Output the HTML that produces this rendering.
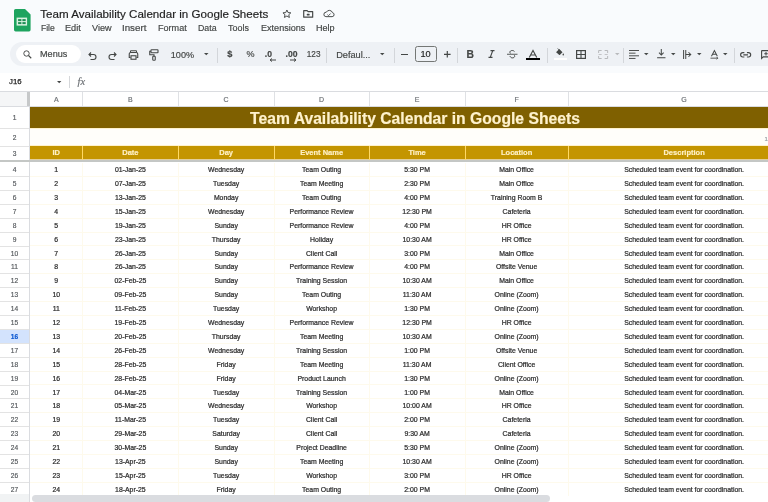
<!DOCTYPE html><html><head><meta charset="utf-8"><style>
*{margin:0;padding:0;box-sizing:border-box}
html,body{width:768px;height:502px;overflow:hidden;will-change:transform;background:#f9fbfd;font-family:"Liberation Sans",sans-serif;position:relative}
.a{position:absolute;white-space:nowrap}
.t{position:absolute;white-space:nowrap;line-height:1;-webkit-text-stroke:0.18px currentColor}
svg{position:absolute;overflow:visible}
</style></head><body>
<svg style="left:14px;top:9px" width="16.6" height="22.4" viewBox="0 0 16.6 22.4"><path d="M1.6 0H11L16.6 5.6V20.8A1.6 1.6 0 0 1 15 22.4H1.6A1.6 1.6 0 0 1 0 20.8V1.6A1.6 1.6 0 0 1 1.6 0Z" fill="#1ea45f"/><rect x="2.6" y="8.6" width="10.5" height="8" fill="#d9f2e0"/><rect x="4.1" y="10.1" width="3.3" height="2" fill="#1f8f55"/><rect x="8.4" y="10.1" width="3.3" height="2" fill="#1f8f55"/><rect x="4.1" y="13.1" width="3.3" height="2" fill="#1f8f55"/><rect x="8.4" y="13.1" width="3.3" height="2" fill="#1f8f55"/></svg>
<div class="t" style="left:40.3px;top:8.1px;font-size:11.6px;color:#1f1f1f">Team Availability Calendar in Google Sheets</div>
<svg style="left:281.8px;top:9px" width="9.8" height="9.2" viewBox="0 0 24 23"><path d="M12 2.5l2.9 6.4 7 .7-5.2 4.7 1.5 6.9L12 17.6l-6.2 3.6 1.5-6.9L2.1 9.6l7-.7z" fill="none" stroke="#444746" stroke-width="2.4" stroke-linejoin="round"/></svg>
<svg style="left:302.6px;top:10px" width="10.4" height="7.8" viewBox="0 0 21 16"><path d="M1.3 1.3h7l2 2h9.4v11.4H1.3z" fill="none" stroke="#444746" stroke-width="2.4" stroke-linejoin="round"/><rect x="7.5" y="7.5" width="6" height="3.6" rx="1" fill="#444746"/></svg>
<svg style="left:322.6px;top:10.2px" width="11.6" height="7.5" viewBox="0 0 26 15"><path d="M6.5 14h14a4.5 4.5 0 0 0 .8-8.9A7.5 7.5 0 0 0 7.5 4 5 5 0 0 0 6.5 14z" fill="none" stroke="#444746" stroke-width="2.2"/><path d="M10 9.5l2.5 2.2 4.5-4.7" fill="none" stroke="#444746" stroke-width="2"/></svg>
<div class="t" style="left:40.7px;top:24.1px;font-size:8.9px;color:#444746;transform-origin:0.0px 0;transform:scaleX(0.963)">File</div>
<div class="t" style="left:65.3px;top:24.1px;font-size:8.9px;color:#444746;transform-origin:0.0px 0;transform:scaleX(1.033)">Edit</div>
<div class="t" style="left:92.0px;top:24.1px;font-size:8.9px;color:#444746;transform-origin:0.0px 0;transform:scaleX(1.025)">View</div>
<div class="t" style="left:122.0px;top:24.1px;font-size:8.9px;color:#444746;transform-origin:0.0px 0;transform:scaleX(1.097)">Insert</div>
<div class="t" style="left:157.5px;top:24.1px;font-size:8.9px;color:#444746;transform-origin:0.0px 0;transform:scaleX(1.021)">Format</div>
<div class="t" style="left:198.0px;top:24.1px;font-size:8.9px;color:#444746;transform-origin:0.0px 0;transform:scaleX(0.991)">Data</div>
<div class="t" style="left:228.3px;top:24.1px;font-size:8.9px;color:#444746;transform-origin:0.0px 0;transform:scaleX(1.008)">Tools</div>
<div class="t" style="left:260.8px;top:24.1px;font-size:8.9px;color:#444746;transform-origin:0.0px 0;transform:scaleX(1.022)">Extensions</div>
<div class="t" style="left:316.3px;top:24.1px;font-size:8.9px;color:#444746;transform-origin:0.0px 0;transform:scaleX(1.020)">Help</div>
<div class="a" style="left:10px;top:41.5px;width:780px;height:24px;border-radius:12px;background:#eef1f5"></div>
<div class="a" style="left:15.8px;top:45.4px;width:64.8px;height:17.6px;border-radius:9px;background:#fff"></div>
<svg style="left:23px;top:50px" width="9" height="9" viewBox="0 0 18 18"><circle cx="7" cy="7" r="5.4" fill="none" stroke="#444746" stroke-width="1.9"/><path d="M11 11l5.5 5.5" stroke="#444746" stroke-width="2.2"/></svg>
<div class="t" style="left:40px;top:50.3px;font-size:9.1px;color:#444746">Menus</div>
<svg style="left:88px;top:51.5px" width="9" height="8" viewBox="0 0 18 16"><path d="M2 5h9a5 5 0 0 1 0 10H5" fill="none" stroke="#444746" stroke-width="2.2"/><path d="M6 1L2 5l4 4" fill="none" stroke="#444746" stroke-width="2.2"/></svg>
<svg style="left:108px;top:51.5px" width="9" height="8" viewBox="0 0 18 16"><path d="M16 5H7a5 5 0 0 0 0 10h6" fill="none" stroke="#444746" stroke-width="2.2"/><path d="M12 1l4 4-4 4" fill="none" stroke="#444746" stroke-width="2.2"/></svg>
<svg style="left:128px;top:49.5px" width="11" height="10" viewBox="0 0 22 20"><path d="M5 5V1.5h12V5" fill="none" stroke="#444746" stroke-width="2"/><path d="M5 15H2.5V8a3 3 0 0 1 3-3h11a3 3 0 0 1 3 3v7H17" fill="none" stroke="#444746" stroke-width="2.2"/><rect x="6" y="11.5" width="10" height="7" fill="none" stroke="#444746" stroke-width="2.2"/></svg>
<svg style="left:149px;top:49px" width="10" height="12" viewBox="0 0 20 24"><rect x="4" y="1.5" width="14" height="6" rx="1" fill="none" stroke="#444746" stroke-width="2.2"/><path d="M4 4.5H1.5v7h8.5v3" fill="none" stroke="#444746" stroke-width="2.2"/><rect x="7.5" y="14.5" width="5" height="8" rx="1.5" fill="none" stroke="#444746" stroke-width="2.2"/></svg>
<div class="t" style="left:170.8px;top:50.6px;font-size:9.1px;color:#444746">100%</div>
<svg style="left:203.8px;top:53.3px" width="4.5" height="2.25" viewBox="0 0 10 5"><path d="M0 0h10L5 5z" fill="#444746"/></svg>
<div class="a" style="left:217.3px;top:47.5px;width:0.8px;height:15px;background:#d3d6da"></div>
<div class="t" style="left:227.2px;top:50.2px;font-size:9.2px;font-weight:bold;color:#444746">$</div>
<div class="t" style="left:246.5px;top:50.4px;font-size:9px;color:#444746">%</div>
<div class="t" style="left:264.8px;top:50.2px;font-size:8.6px;font-weight:bold;color:#444746">.0</div>
<svg style="left:269px;top:57.5px" width="7" height="4" viewBox="0 0 14 8"><path d="M14 4H3M6 1L2 4l4 3" fill="none" stroke="#444746" stroke-width="2"/></svg>
<div class="t" style="left:285.6px;top:50.2px;font-size:8.6px;font-weight:bold;color:#444746">.00</div>
<svg style="left:290px;top:57.5px" width="7" height="4" viewBox="0 0 14 8"><path d="M0 4h11M8 1l4 3-4 3" fill="none" stroke="#444746" stroke-width="2"/></svg>
<div class="t" style="left:306.8px;top:51.2px;font-size:8.2px;color:#444746">123</div>
<div class="a" style="left:325.6px;top:47.5px;width:0.8px;height:15px;background:#d3d6da"></div>
<div class="t" style="left:336.2px;top:50.5px;font-size:9.2px;color:#444746">Defaul...</div>
<svg style="left:379.8px;top:53.3px" width="4.5" height="2.25" viewBox="0 0 10 5"><path d="M0 0h10L5 5z" fill="#444746"/></svg>
<div class="a" style="left:393.8px;top:47.5px;width:0.8px;height:15px;background:#d3d6da"></div>
<div class="a" style="left:401.3px;top:53.9px;width:7px;height:1.3px;background:#444746"></div>
<div class="a" style="left:415.3px;top:46.3px;width:21.4px;height:15.4px;border:1px solid #747775;border-radius:2.5px"></div>
<div class="t" style="left:420.5px;top:50px;font-size:9.2px;color:#1f1f1f">10</div>
<svg style="left:443.7px;top:50.8px" width="6.6" height="6.6" viewBox="0 0 10 10"><path d="M5 0v10M0 5h10" stroke="#444746" stroke-width="1.8"/></svg>
<div class="a" style="left:457.3px;top:47.5px;width:0.8px;height:15px;background:#d3d6da"></div>
<div class="t" style="left:466.6px;top:50.2px;font-size:10.3px;font-weight:bold;color:#444746">B</div>
<svg style="left:488px;top:50.2px" width="7" height="8" viewBox="0 0 14 16"><path d="M5 1.2h8M1 14.8h8M9.5 1.2L4.5 14.8" fill="none" stroke="#444746" stroke-width="2.3"/></svg>
<svg style="left:506.5px;top:50px" width="10.5" height="8.5" viewBox="0 0 21 17"><path d="M0 8.5h21" stroke="#444746" stroke-width="1.8"/><path d="M15 3.2C14 1.8 12.5 1 10.5 1 7.5 1 5.8 2.6 5.8 4.4c0 1 .4 1.8 1 2.4M6 12.2c.7 2.2 2.5 3.6 4.6 3.6 3 0 4.8-1.6 4.8-3.4 0-.7-.2-1.3-.6-1.8" fill="none" stroke="#444746" stroke-width="2"/></svg>
<svg style="left:527.5px;top:50px" width="10" height="7.5" viewBox="0 0 20 15"><path d="M2.5 15L10 1l7.5 14M5.3 10h9.4" fill="none" stroke="#444746" stroke-width="2.2"/></svg>
<div class="a" style="left:525.8px;top:58px;width:14.3px;height:1.8px;background:#000"></div>
<div class="a" style="left:546.5px;top:47.5px;width:0.8px;height:15px;background:#d3d6da"></div>
<svg style="left:555px;top:48.3px" width="9.5" height="8" viewBox="0 0 19 16"><path d="M2 8.5L8.5 2l6.5 6.5-5 5a1.4 1.4 0 0 1-2 0L3.5 9.5z" fill="#444746"/><path d="M5.5 1l4 4" stroke="#444746" stroke-width="1.8"/><path d="M16.5 10.5c-.9 1.4-1.5 2.2-1.5 3a1.5 1.5 0 0 0 3 0c0-.8-.6-1.6-1.5-3z" fill="#444746"/></svg>
<div class="a" style="left:553.5px;top:57.6px;width:13.5px;height:2px;background:#fff"></div>
<svg style="left:575.8px;top:49.7px" width="10" height="9" viewBox="0 0 20 18"><rect x="1.2" y="1.2" width="17.6" height="15.6" fill="none" stroke="#444746" stroke-width="2.4"/><path d="M10 1v16M1 9h18" stroke="#444746" stroke-width="2.2"/></svg>
<svg style="left:598px;top:49.7px" width="10.3" height="9" viewBox="0 0 20 18"><path d="M1 6V1h6M13 1h6v5M19 12v5h-6M7 17H1v-5" fill="none" stroke="#b7b9bb" stroke-width="2"/><path d="M1 9h6M13 9h6" stroke="#b7b9bb" stroke-width="1.6"/></svg>
<svg style="left:614.8px;top:53.3px" width="4.5" height="2.25" viewBox="0 0 10 5"><path d="M0 0h10L5 5z" fill="#b7b9bb"/></svg>
<div class="a" style="left:623.2px;top:47.5px;width:0.8px;height:15px;background:#d3d6da"></div>
<svg style="left:629.2px;top:49.6px" width="10" height="9" viewBox="0 0 20 18"><path d="M0 1h20M0 6.3h13M0 11.6h20M0 16.9h13" stroke="#444746" stroke-width="1.9"/></svg>
<svg style="left:643.9px;top:53.3px" width="4.5" height="2.25" viewBox="0 0 10 5"><path d="M0 0h10L5 5z" fill="#444746"/></svg>
<svg style="left:656.7px;top:49.4px" width="8.6" height="9.3" viewBox="0 0 18 20"><path d="M0 18.8h18" stroke="#444746" stroke-width="2.2"/><path d="M9 0v12M4 8l5 5 5-5" fill="none" stroke="#444746" stroke-width="2.2"/></svg>
<svg style="left:670.7px;top:53.3px" width="4.5" height="2.25" viewBox="0 0 10 5"><path d="M0 0h10L5 5z" fill="#444746"/></svg>
<svg style="left:682.5px;top:49.6px" width="8.5" height="9" viewBox="0 0 17 18"><path d="M1.2 0v18M5.5 0v18" stroke="#444746" stroke-width="2"/><path d="M5.5 9h10M11 4.5l4.5 4.5-4.5 4.5" fill="none" stroke="#444746" stroke-width="2.1"/></svg>
<svg style="left:697px;top:53.3px" width="4.5" height="2.25" viewBox="0 0 10 5"><path d="M0 0h10L5 5z" fill="#444746"/></svg>
<svg style="left:709.7px;top:49.8px" width="8.8" height="9" viewBox="0 0 18 18"><path d="M3 12.5L9 1l6 11.5M5.2 8.3h7.6" fill="none" stroke="#444746" stroke-width="2.1"/><path d="M1 16.5h15M13.5 14l2.5 2.5-2.5 2.5" fill="none" stroke="#444746" stroke-width="1.8"/></svg>
<svg style="left:723.3px;top:53.3px" width="4.5" height="2.25" viewBox="0 0 10 5"><path d="M0 0h10L5 5z" fill="#444746"/></svg>
<div class="a" style="left:733.5px;top:47.5px;width:0.8px;height:15px;background:#d3d6da"></div>
<svg style="left:740px;top:52px" width="11.3" height="5.7" viewBox="0 0 22 11"><path d="M8.5 1.2H5.5a4.3 4.3 0 0 0 0 8.6h3M13.5 1.2h3a4.3 4.3 0 0 1 0 8.6h-3M6.5 5.5h9" fill="none" stroke="#444746" stroke-width="2.2"/></svg>
<svg style="left:760.8px;top:49.7px" width="10" height="9" viewBox="0 0 20 18"><path d="M1.2 17V2.2a1 1 0 0 1 1-1H18.8V13.8H4.5z" fill="none" stroke="#444746" stroke-width="2.2"/><path d="M10 4v7M6.5 7.5h7" stroke="#444746" stroke-width="2"/></svg>
<div class="a" style="left:0;top:72.5px;width:768px;height:18.5px;background:#fff"></div>
<div class="t" style="left:9px;top:78.2px;font-size:7.8px;color:#1f1f1f;-webkit-text-stroke:0.25px #1f1f1f">J16</div>
<svg style="left:56.5px;top:80.6px" width="4.4" height="2.2" viewBox="0 0 10 5"><path d="M0 0h10L5 5z" fill="#444746"/></svg>
<div class="a" style="left:69px;top:76px;width:0.8px;height:11.5px;background:#d5d7da"></div>
<div class="t" style="left:77.5px;top:76.6px;font-size:10.5px;font-style:italic;font-family:'Liberation Serif',serif;color:#6f7377">fx</div>
<div class="a" style="left:0;top:90.5px;width:768px;height:411.5px;background:#fff"></div>
<div class="a" style="left:0;top:90.5px;width:768px;height:1.2px;background:#dadce0"></div>
<div class="a" style="left:0;top:91.5px;width:28px;height:15.0px;background:#f5f6f7"></div>
<div class="a" style="left:27px;top:91.5px;width:3px;height:15.0px;background:#c6c8c9"></div>
<div class="t" style="left:30px;width:52.5px;text-align:center;top:95.6px;font-size:7px;color:#6d7175">A</div>
<div class="t" style="left:82.5px;width:95.80000000000001px;text-align:center;top:95.6px;font-size:7px;color:#6d7175">B</div>
<div class="a" style="left:82.2px;top:91.5px;width:0.8px;height:15.0px;background:#dfe1e4"></div>
<div class="t" style="left:178.3px;width:95.69999999999999px;text-align:center;top:95.6px;font-size:7px;color:#6d7175">C</div>
<div class="a" style="left:178.0px;top:91.5px;width:0.8px;height:15.0px;background:#dfe1e4"></div>
<div class="t" style="left:274px;width:95.19999999999999px;text-align:center;top:95.6px;font-size:7px;color:#6d7175">D</div>
<div class="a" style="left:273.7px;top:91.5px;width:0.8px;height:15.0px;background:#dfe1e4"></div>
<div class="t" style="left:369.2px;width:95.80000000000001px;text-align:center;top:95.6px;font-size:7px;color:#6d7175">E</div>
<div class="a" style="left:368.9px;top:91.5px;width:0.8px;height:15.0px;background:#dfe1e4"></div>
<div class="t" style="left:465px;width:103.20000000000005px;text-align:center;top:95.6px;font-size:7px;color:#6d7175">F</div>
<div class="a" style="left:464.7px;top:91.5px;width:0.8px;height:15.0px;background:#dfe1e4"></div>
<div class="t" style="left:568.2px;width:231.79999999999995px;text-align:center;top:95.6px;font-size:7px;color:#6d7175">G</div>
<div class="a" style="left:567.9000000000001px;top:91.5px;width:0.8px;height:15.0px;background:#dfe1e4"></div>
<div class="a" style="left:0;top:106.2px;width:768px;height:0.9px;background:#dadce0"></div>
<div class="a" style="left:0;top:107.0px;width:29px;height:21.099999999999994px;background:#fff"></div><div class="t" style="left:0;width:29px;text-align:center;top:114.25px;font-size:7.4px;font-weight:normal;color:#55595d;transform:scaleX(0.9)">1</div>
<div class="a" style="left:0;top:128.1px;width:29px;height:18.200000000000017px;background:#fff"></div><div class="t" style="left:0;width:29px;text-align:center;top:133.89999999999998px;font-size:7.4px;font-weight:normal;color:#55595d;transform:scaleX(0.9)">2</div>
<div class="a" style="left:0;top:146.3px;width:29px;height:14.0px;background:#fff"></div><div class="t" style="left:0;width:29px;text-align:center;top:150.0px;font-size:7.4px;font-weight:normal;color:#55595d;transform:scaleX(0.9)">3</div>
<div class="a" style="left:0;top:162.5px;width:29px;height:13.900000000000006px;background:#fff"></div><div class="t" style="left:0;width:29px;text-align:center;top:166.14999999999998px;font-size:7.4px;font-weight:normal;color:#55595d;transform:scaleX(0.9)">4</div>
<div class="a" style="left:0;top:176.4px;width:29px;height:13.900000000000006px;background:#fff"></div><div class="t" style="left:0;width:29px;text-align:center;top:180.05px;font-size:7.4px;font-weight:normal;color:#55595d;transform:scaleX(0.9)">5</div>
<div class="a" style="left:0;top:190.3px;width:29px;height:13.900000000000006px;background:#fff"></div><div class="t" style="left:0;width:29px;text-align:center;top:193.95px;font-size:7.4px;font-weight:normal;color:#55595d;transform:scaleX(0.9)">6</div>
<div class="a" style="left:0;top:204.2px;width:29px;height:13.900000000000006px;background:#fff"></div><div class="t" style="left:0;width:29px;text-align:center;top:207.84999999999997px;font-size:7.4px;font-weight:normal;color:#55595d;transform:scaleX(0.9)">7</div>
<div class="a" style="left:0;top:218.1px;width:29px;height:13.900000000000006px;background:#fff"></div><div class="t" style="left:0;width:29px;text-align:center;top:221.75px;font-size:7.4px;font-weight:normal;color:#55595d;transform:scaleX(0.9)">8</div>
<div class="a" style="left:0;top:232.0px;width:29px;height:13.900000000000006px;background:#fff"></div><div class="t" style="left:0;width:29px;text-align:center;top:235.64999999999998px;font-size:7.4px;font-weight:normal;color:#55595d;transform:scaleX(0.9)">9</div>
<div class="a" style="left:0;top:245.9px;width:29px;height:13.900000000000006px;background:#fff"></div><div class="t" style="left:0;width:29px;text-align:center;top:249.55px;font-size:7.4px;font-weight:normal;color:#55595d;transform:scaleX(0.9)">10</div>
<div class="a" style="left:0;top:259.8px;width:29px;height:13.899999999999977px;background:#fff"></div><div class="t" style="left:0;width:29px;text-align:center;top:263.45px;font-size:7.4px;font-weight:normal;color:#55595d;transform:scaleX(0.9)">11</div>
<div class="a" style="left:0;top:273.7px;width:29px;height:13.899999999999977px;background:#fff"></div><div class="t" style="left:0;width:29px;text-align:center;top:277.34999999999997px;font-size:7.4px;font-weight:normal;color:#55595d;transform:scaleX(0.9)">12</div>
<div class="a" style="left:0;top:287.6px;width:29px;height:13.899999999999977px;background:#fff"></div><div class="t" style="left:0;width:29px;text-align:center;top:291.25px;font-size:7.4px;font-weight:normal;color:#55595d;transform:scaleX(0.9)">13</div>
<div class="a" style="left:0;top:301.5px;width:29px;height:13.899999999999977px;background:#fff"></div><div class="t" style="left:0;width:29px;text-align:center;top:305.15px;font-size:7.4px;font-weight:normal;color:#55595d;transform:scaleX(0.9)">14</div>
<div class="a" style="left:0;top:315.4px;width:29px;height:13.899999999999977px;background:#fff"></div><div class="t" style="left:0;width:29px;text-align:center;top:319.04999999999995px;font-size:7.4px;font-weight:normal;color:#55595d;transform:scaleX(0.9)">15</div>
<div class="a" style="left:0;top:329.3px;width:29px;height:13.899999999999977px;background:#d3e3fd"></div><div class="t" style="left:0;width:29px;text-align:center;top:332.95px;font-size:7.4px;font-weight:bold;color:#0b57d0;transform:scaleX(0.9)">16</div>
<div class="a" style="left:0;top:343.20000000000005px;width:29px;height:13.899999999999977px;background:#fff"></div><div class="t" style="left:0;width:29px;text-align:center;top:346.85px;font-size:7.4px;font-weight:normal;color:#55595d;transform:scaleX(0.9)">17</div>
<div class="a" style="left:0;top:357.1px;width:29px;height:13.899999999999977px;background:#fff"></div><div class="t" style="left:0;width:29px;text-align:center;top:360.75px;font-size:7.4px;font-weight:normal;color:#55595d;transform:scaleX(0.9)">18</div>
<div class="a" style="left:0;top:371.0px;width:29px;height:13.899999999999977px;background:#fff"></div><div class="t" style="left:0;width:29px;text-align:center;top:374.65px;font-size:7.4px;font-weight:normal;color:#55595d;transform:scaleX(0.9)">19</div>
<div class="a" style="left:0;top:384.9px;width:29px;height:13.899999999999977px;background:#fff"></div><div class="t" style="left:0;width:29px;text-align:center;top:388.54999999999995px;font-size:7.4px;font-weight:normal;color:#55595d;transform:scaleX(0.9)">20</div>
<div class="a" style="left:0;top:398.8px;width:29px;height:13.899999999999977px;background:#fff"></div><div class="t" style="left:0;width:29px;text-align:center;top:402.45px;font-size:7.4px;font-weight:normal;color:#55595d;transform:scaleX(0.9)">21</div>
<div class="a" style="left:0;top:412.70000000000005px;width:29px;height:13.899999999999977px;background:#fff"></div><div class="t" style="left:0;width:29px;text-align:center;top:416.35px;font-size:7.4px;font-weight:normal;color:#55595d;transform:scaleX(0.9)">22</div>
<div class="a" style="left:0;top:426.6px;width:29px;height:13.899999999999977px;background:#fff"></div><div class="t" style="left:0;width:29px;text-align:center;top:430.25px;font-size:7.4px;font-weight:normal;color:#55595d;transform:scaleX(0.9)">23</div>
<div class="a" style="left:0;top:440.5px;width:29px;height:13.899999999999977px;background:#fff"></div><div class="t" style="left:0;width:29px;text-align:center;top:444.15px;font-size:7.4px;font-weight:normal;color:#55595d;transform:scaleX(0.9)">24</div>
<div class="a" style="left:0;top:454.40000000000003px;width:29px;height:13.899999999999977px;background:#fff"></div><div class="t" style="left:0;width:29px;text-align:center;top:458.05px;font-size:7.4px;font-weight:normal;color:#55595d;transform:scaleX(0.9)">25</div>
<div class="a" style="left:0;top:468.3px;width:29px;height:13.899999999999977px;background:#fff"></div><div class="t" style="left:0;width:29px;text-align:center;top:471.95px;font-size:7.4px;font-weight:normal;color:#55595d;transform:scaleX(0.9)">26</div>
<div class="a" style="left:0;top:482.2px;width:29px;height:13.899999999999977px;background:#fff"></div><div class="t" style="left:0;width:29px;text-align:center;top:485.84999999999997px;font-size:7.4px;font-weight:normal;color:#55595d;transform:scaleX(0.9)">27</div>
<div class="a" style="left:0;top:127.69999999999999px;width:29.5px;height:0.8px;background:#e3e3e3"></div>
<div class="a" style="left:0;top:145.9px;width:29.5px;height:0.8px;background:#e3e3e3"></div>
<div class="a" style="left:0;top:159.9px;width:29.5px;height:0.8px;background:#e3e3e3"></div>
<div class="a" style="left:0;top:176.0px;width:29.5px;height:0.8px;background:#e3e3e3"></div>
<div class="a" style="left:0;top:189.9px;width:29.5px;height:0.8px;background:#e3e3e3"></div>
<div class="a" style="left:0;top:203.8px;width:29.5px;height:0.8px;background:#e3e3e3"></div>
<div class="a" style="left:0;top:217.7px;width:29.5px;height:0.8px;background:#e3e3e3"></div>
<div class="a" style="left:0;top:231.6px;width:29.5px;height:0.8px;background:#e3e3e3"></div>
<div class="a" style="left:0;top:245.5px;width:29.5px;height:0.8px;background:#e3e3e3"></div>
<div class="a" style="left:0;top:259.40000000000003px;width:29.5px;height:0.8px;background:#e3e3e3"></div>
<div class="a" style="left:0;top:273.3px;width:29.5px;height:0.8px;background:#e3e3e3"></div>
<div class="a" style="left:0;top:287.2px;width:29.5px;height:0.8px;background:#e3e3e3"></div>
<div class="a" style="left:0;top:301.1px;width:29.5px;height:0.8px;background:#e3e3e3"></div>
<div class="a" style="left:0;top:315.0px;width:29.5px;height:0.8px;background:#e3e3e3"></div>
<div class="a" style="left:0;top:328.9px;width:29.5px;height:0.8px;background:#e3e3e3"></div>
<div class="a" style="left:0;top:342.8px;width:29.5px;height:0.8px;background:#e3e3e3"></div>
<div class="a" style="left:0;top:356.70000000000005px;width:29.5px;height:0.8px;background:#e3e3e3"></div>
<div class="a" style="left:0;top:370.6px;width:29.5px;height:0.8px;background:#e3e3e3"></div>
<div class="a" style="left:0;top:384.5px;width:29.5px;height:0.8px;background:#e3e3e3"></div>
<div class="a" style="left:0;top:398.4px;width:29.5px;height:0.8px;background:#e3e3e3"></div>
<div class="a" style="left:0;top:412.3px;width:29.5px;height:0.8px;background:#e3e3e3"></div>
<div class="a" style="left:0;top:426.20000000000005px;width:29.5px;height:0.8px;background:#e3e3e3"></div>
<div class="a" style="left:0;top:440.1px;width:29.5px;height:0.8px;background:#e3e3e3"></div>
<div class="a" style="left:0;top:454.0px;width:29.5px;height:0.8px;background:#e3e3e3"></div>
<div class="a" style="left:0;top:467.90000000000003px;width:29.5px;height:0.8px;background:#e3e3e3"></div>
<div class="a" style="left:0;top:481.8px;width:29.5px;height:0.8px;background:#e3e3e3"></div>
<div class="a" style="left:0;top:495.7px;width:29.5px;height:0.8px;background:#e3e3e3"></div>
<div class="a" style="left:29.2px;top:106.5px;width:0.9px;height:395.5px;background:#dadce0"></div>
<div class="a" style="left:30px;top:107.0px;width:740px;height:21.099999999999994px;background:#7f6000"></div>
<div class="t" style="left:30px;width:770px;text-align:center;top:110.5px;font-size:15.7px;font-weight:bold;color:#fff2cc">Team Availability Calendar in Google Sheets</div>
<div class="a" style="left:30px;top:128.1px;width:740px;height:18.200000000000017px;background:#fffefa"></div>
<div class="a" style="left:30px;top:128.1px;width:740px;height:1px;background:#fff2cc"></div>
<div class="a" style="left:30px;top:145.3px;width:740px;height:1px;background:#fff2cc"></div>
<div class="t" style="left:764.5px;top:136px;font-size:6px;color:#9aa0a6">1</div>
<div class="a" style="left:30px;top:146.3px;width:740px;height:14.0px;background:#c49500"></div>
<div class="a" style="left:30px;top:158.9px;width:740px;height:1.4px;background:#e2cf9c"></div>
<div class="t" style="left:30px;width:52.5px;text-align:center;top:149.3px;font-size:7.5px;font-weight:bold;color:#fff0c4">ID</div>
<div class="a" style="left:82.0px;top:146.3px;width:1px;height:14.0px;background:#ffd966"></div>
<div class="t" style="left:82.5px;width:95.80000000000001px;text-align:center;top:149.3px;font-size:7.5px;font-weight:bold;color:#fff0c4">Date</div>
<div class="a" style="left:177.8px;top:146.3px;width:1px;height:14.0px;background:#ffd966"></div>
<div class="t" style="left:178.3px;width:95.69999999999999px;text-align:center;top:149.3px;font-size:7.5px;font-weight:bold;color:#fff0c4">Day</div>
<div class="a" style="left:273.5px;top:146.3px;width:1px;height:14.0px;background:#ffd966"></div>
<div class="t" style="left:274px;width:95.19999999999999px;text-align:center;top:149.3px;font-size:7.5px;font-weight:bold;color:#fff0c4">Event Name</div>
<div class="a" style="left:368.7px;top:146.3px;width:1px;height:14.0px;background:#ffd966"></div>
<div class="t" style="left:369.2px;width:95.80000000000001px;text-align:center;top:149.3px;font-size:7.5px;font-weight:bold;color:#fff0c4">Time</div>
<div class="a" style="left:464.5px;top:146.3px;width:1px;height:14.0px;background:#ffd966"></div>
<div class="t" style="left:465px;width:103.20000000000005px;text-align:center;top:149.3px;font-size:7.5px;font-weight:bold;color:#fff0c4">Location</div>
<div class="a" style="left:567.7px;top:146.3px;width:1px;height:14.0px;background:#ffd966"></div>
<div class="t" style="left:568.2px;width:231.79999999999995px;text-align:center;top:149.3px;font-size:7.5px;font-weight:bold;color:#fff0c4">Description</div>
<div class="a" style="left:0;top:160.3px;width:768px;height:2.1999999999999886px;background:#c4c7c5"></div>
<div class="a" style="left:30px;top:175.9px;width:740px;height:0.8px;background:#fefaec"></div>
<div class="t" style="left:30px;width:52.5px;text-align:center;top:167.1px;font-size:6.9px;color:#262626;-webkit-text-stroke:0.22px #333">1</div>
<div class="t" style="left:82.5px;width:95.80000000000001px;text-align:center;top:167.1px;font-size:6.9px;color:#262626;-webkit-text-stroke:0.22px #333">01-Jan-25</div>
<div class="t" style="left:178.3px;width:95.69999999999999px;text-align:center;top:167.1px;font-size:6.9px;color:#262626;-webkit-text-stroke:0.22px #333">Wednesday</div>
<div class="t" style="left:274px;width:95.19999999999999px;text-align:center;top:167.1px;font-size:6.9px;color:#262626;-webkit-text-stroke:0.22px #333">Team Outing</div>
<div class="t" style="left:369.2px;width:95.80000000000001px;text-align:center;top:167.1px;font-size:6.9px;color:#262626;-webkit-text-stroke:0.22px #333">5:30 PM</div>
<div class="t" style="left:465px;width:103.20000000000005px;text-align:center;top:167.1px;font-size:6.9px;color:#262626;-webkit-text-stroke:0.22px #333">Main Office</div>
<div class="t" style="left:568.2px;width:231.79999999999995px;text-align:center;top:167.1px;font-size:6.9px;color:#262626;-webkit-text-stroke:0.22px #333">Scheduled team event for coordination.</div>
<div class="a" style="left:30px;top:189.8px;width:740px;height:0.8px;background:#fefaec"></div>
<div class="t" style="left:30px;width:52.5px;text-align:center;top:181.0px;font-size:6.9px;color:#262626;-webkit-text-stroke:0.22px #333">2</div>
<div class="t" style="left:82.5px;width:95.80000000000001px;text-align:center;top:181.0px;font-size:6.9px;color:#262626;-webkit-text-stroke:0.22px #333">07-Jan-25</div>
<div class="t" style="left:178.3px;width:95.69999999999999px;text-align:center;top:181.0px;font-size:6.9px;color:#262626;-webkit-text-stroke:0.22px #333">Tuesday</div>
<div class="t" style="left:274px;width:95.19999999999999px;text-align:center;top:181.0px;font-size:6.9px;color:#262626;-webkit-text-stroke:0.22px #333">Team Meeting</div>
<div class="t" style="left:369.2px;width:95.80000000000001px;text-align:center;top:181.0px;font-size:6.9px;color:#262626;-webkit-text-stroke:0.22px #333">2:30 PM</div>
<div class="t" style="left:465px;width:103.20000000000005px;text-align:center;top:181.0px;font-size:6.9px;color:#262626;-webkit-text-stroke:0.22px #333">Main Office</div>
<div class="t" style="left:568.2px;width:231.79999999999995px;text-align:center;top:181.0px;font-size:6.9px;color:#262626;-webkit-text-stroke:0.22px #333">Scheduled team event for coordination.</div>
<div class="a" style="left:30px;top:203.70000000000002px;width:740px;height:0.8px;background:#fefaec"></div>
<div class="t" style="left:30px;width:52.5px;text-align:center;top:194.9px;font-size:6.9px;color:#262626;-webkit-text-stroke:0.22px #333">3</div>
<div class="t" style="left:82.5px;width:95.80000000000001px;text-align:center;top:194.9px;font-size:6.9px;color:#262626;-webkit-text-stroke:0.22px #333">13-Jan-25</div>
<div class="t" style="left:178.3px;width:95.69999999999999px;text-align:center;top:194.9px;font-size:6.9px;color:#262626;-webkit-text-stroke:0.22px #333">Monday</div>
<div class="t" style="left:274px;width:95.19999999999999px;text-align:center;top:194.9px;font-size:6.9px;color:#262626;-webkit-text-stroke:0.22px #333">Team Outing</div>
<div class="t" style="left:369.2px;width:95.80000000000001px;text-align:center;top:194.9px;font-size:6.9px;color:#262626;-webkit-text-stroke:0.22px #333">4:00 PM</div>
<div class="t" style="left:465px;width:103.20000000000005px;text-align:center;top:194.9px;font-size:6.9px;color:#262626;-webkit-text-stroke:0.22px #333">Training Room B</div>
<div class="t" style="left:568.2px;width:231.79999999999995px;text-align:center;top:194.9px;font-size:6.9px;color:#262626;-webkit-text-stroke:0.22px #333">Scheduled team event for coordination.</div>
<div class="a" style="left:30px;top:217.6px;width:740px;height:0.8px;background:#fefaec"></div>
<div class="t" style="left:30px;width:52.5px;text-align:center;top:208.79999999999998px;font-size:6.9px;color:#262626;-webkit-text-stroke:0.22px #333">4</div>
<div class="t" style="left:82.5px;width:95.80000000000001px;text-align:center;top:208.79999999999998px;font-size:6.9px;color:#262626;-webkit-text-stroke:0.22px #333">15-Jan-25</div>
<div class="t" style="left:178.3px;width:95.69999999999999px;text-align:center;top:208.79999999999998px;font-size:6.9px;color:#262626;-webkit-text-stroke:0.22px #333">Wednesday</div>
<div class="t" style="left:274px;width:95.19999999999999px;text-align:center;top:208.79999999999998px;font-size:6.9px;color:#262626;-webkit-text-stroke:0.22px #333">Performance Review</div>
<div class="t" style="left:369.2px;width:95.80000000000001px;text-align:center;top:208.79999999999998px;font-size:6.9px;color:#262626;-webkit-text-stroke:0.22px #333">12:30 PM</div>
<div class="t" style="left:465px;width:103.20000000000005px;text-align:center;top:208.79999999999998px;font-size:6.9px;color:#262626;-webkit-text-stroke:0.22px #333">Cafeteria</div>
<div class="t" style="left:568.2px;width:231.79999999999995px;text-align:center;top:208.79999999999998px;font-size:6.9px;color:#262626;-webkit-text-stroke:0.22px #333">Scheduled team event for coordination.</div>
<div class="a" style="left:30px;top:231.5px;width:740px;height:0.8px;background:#fefaec"></div>
<div class="t" style="left:30px;width:52.5px;text-align:center;top:222.7px;font-size:6.9px;color:#262626;-webkit-text-stroke:0.22px #333">5</div>
<div class="t" style="left:82.5px;width:95.80000000000001px;text-align:center;top:222.7px;font-size:6.9px;color:#262626;-webkit-text-stroke:0.22px #333">19-Jan-25</div>
<div class="t" style="left:178.3px;width:95.69999999999999px;text-align:center;top:222.7px;font-size:6.9px;color:#262626;-webkit-text-stroke:0.22px #333">Sunday</div>
<div class="t" style="left:274px;width:95.19999999999999px;text-align:center;top:222.7px;font-size:6.9px;color:#262626;-webkit-text-stroke:0.22px #333">Performance Review</div>
<div class="t" style="left:369.2px;width:95.80000000000001px;text-align:center;top:222.7px;font-size:6.9px;color:#262626;-webkit-text-stroke:0.22px #333">4:00 PM</div>
<div class="t" style="left:465px;width:103.20000000000005px;text-align:center;top:222.7px;font-size:6.9px;color:#262626;-webkit-text-stroke:0.22px #333">HR Office</div>
<div class="t" style="left:568.2px;width:231.79999999999995px;text-align:center;top:222.7px;font-size:6.9px;color:#262626;-webkit-text-stroke:0.22px #333">Scheduled team event for coordination.</div>
<div class="a" style="left:30px;top:245.4px;width:740px;height:0.8px;background:#fefaec"></div>
<div class="t" style="left:30px;width:52.5px;text-align:center;top:236.6px;font-size:6.9px;color:#262626;-webkit-text-stroke:0.22px #333">6</div>
<div class="t" style="left:82.5px;width:95.80000000000001px;text-align:center;top:236.6px;font-size:6.9px;color:#262626;-webkit-text-stroke:0.22px #333">23-Jan-25</div>
<div class="t" style="left:178.3px;width:95.69999999999999px;text-align:center;top:236.6px;font-size:6.9px;color:#262626;-webkit-text-stroke:0.22px #333">Thursday</div>
<div class="t" style="left:274px;width:95.19999999999999px;text-align:center;top:236.6px;font-size:6.9px;color:#262626;-webkit-text-stroke:0.22px #333">Holiday</div>
<div class="t" style="left:369.2px;width:95.80000000000001px;text-align:center;top:236.6px;font-size:6.9px;color:#262626;-webkit-text-stroke:0.22px #333">10:30 AM</div>
<div class="t" style="left:465px;width:103.20000000000005px;text-align:center;top:236.6px;font-size:6.9px;color:#262626;-webkit-text-stroke:0.22px #333">HR Office</div>
<div class="t" style="left:568.2px;width:231.79999999999995px;text-align:center;top:236.6px;font-size:6.9px;color:#262626;-webkit-text-stroke:0.22px #333">Scheduled team event for coordination.</div>
<div class="a" style="left:30px;top:259.3px;width:740px;height:0.8px;background:#fefaec"></div>
<div class="t" style="left:30px;width:52.5px;text-align:center;top:250.5px;font-size:6.9px;color:#262626;-webkit-text-stroke:0.22px #333">7</div>
<div class="t" style="left:82.5px;width:95.80000000000001px;text-align:center;top:250.5px;font-size:6.9px;color:#262626;-webkit-text-stroke:0.22px #333">26-Jan-25</div>
<div class="t" style="left:178.3px;width:95.69999999999999px;text-align:center;top:250.5px;font-size:6.9px;color:#262626;-webkit-text-stroke:0.22px #333">Sunday</div>
<div class="t" style="left:274px;width:95.19999999999999px;text-align:center;top:250.5px;font-size:6.9px;color:#262626;-webkit-text-stroke:0.22px #333">Client Call</div>
<div class="t" style="left:369.2px;width:95.80000000000001px;text-align:center;top:250.5px;font-size:6.9px;color:#262626;-webkit-text-stroke:0.22px #333">3:00 PM</div>
<div class="t" style="left:465px;width:103.20000000000005px;text-align:center;top:250.5px;font-size:6.9px;color:#262626;-webkit-text-stroke:0.22px #333">Main Office</div>
<div class="t" style="left:568.2px;width:231.79999999999995px;text-align:center;top:250.5px;font-size:6.9px;color:#262626;-webkit-text-stroke:0.22px #333">Scheduled team event for coordination.</div>
<div class="a" style="left:30px;top:273.2px;width:740px;height:0.8px;background:#fefaec"></div>
<div class="t" style="left:30px;width:52.5px;text-align:center;top:264.40000000000003px;font-size:6.9px;color:#262626;-webkit-text-stroke:0.22px #333">8</div>
<div class="t" style="left:82.5px;width:95.80000000000001px;text-align:center;top:264.40000000000003px;font-size:6.9px;color:#262626;-webkit-text-stroke:0.22px #333">26-Jan-25</div>
<div class="t" style="left:178.3px;width:95.69999999999999px;text-align:center;top:264.40000000000003px;font-size:6.9px;color:#262626;-webkit-text-stroke:0.22px #333">Sunday</div>
<div class="t" style="left:274px;width:95.19999999999999px;text-align:center;top:264.40000000000003px;font-size:6.9px;color:#262626;-webkit-text-stroke:0.22px #333">Performance Review</div>
<div class="t" style="left:369.2px;width:95.80000000000001px;text-align:center;top:264.40000000000003px;font-size:6.9px;color:#262626;-webkit-text-stroke:0.22px #333">4:00 PM</div>
<div class="t" style="left:465px;width:103.20000000000005px;text-align:center;top:264.40000000000003px;font-size:6.9px;color:#262626;-webkit-text-stroke:0.22px #333">Offsite Venue</div>
<div class="t" style="left:568.2px;width:231.79999999999995px;text-align:center;top:264.40000000000003px;font-size:6.9px;color:#262626;-webkit-text-stroke:0.22px #333">Scheduled team event for coordination.</div>
<div class="a" style="left:30px;top:287.09999999999997px;width:740px;height:0.8px;background:#fefaec"></div>
<div class="t" style="left:30px;width:52.5px;text-align:center;top:278.3px;font-size:6.9px;color:#262626;-webkit-text-stroke:0.22px #333">9</div>
<div class="t" style="left:82.5px;width:95.80000000000001px;text-align:center;top:278.3px;font-size:6.9px;color:#262626;-webkit-text-stroke:0.22px #333">02-Feb-25</div>
<div class="t" style="left:178.3px;width:95.69999999999999px;text-align:center;top:278.3px;font-size:6.9px;color:#262626;-webkit-text-stroke:0.22px #333">Sunday</div>
<div class="t" style="left:274px;width:95.19999999999999px;text-align:center;top:278.3px;font-size:6.9px;color:#262626;-webkit-text-stroke:0.22px #333">Training Session</div>
<div class="t" style="left:369.2px;width:95.80000000000001px;text-align:center;top:278.3px;font-size:6.9px;color:#262626;-webkit-text-stroke:0.22px #333">10:30 AM</div>
<div class="t" style="left:465px;width:103.20000000000005px;text-align:center;top:278.3px;font-size:6.9px;color:#262626;-webkit-text-stroke:0.22px #333">Main Office</div>
<div class="t" style="left:568.2px;width:231.79999999999995px;text-align:center;top:278.3px;font-size:6.9px;color:#262626;-webkit-text-stroke:0.22px #333">Scheduled team event for coordination.</div>
<div class="a" style="left:30px;top:301.0px;width:740px;height:0.8px;background:#fefaec"></div>
<div class="t" style="left:30px;width:52.5px;text-align:center;top:292.20000000000005px;font-size:6.9px;color:#262626;-webkit-text-stroke:0.22px #333">10</div>
<div class="t" style="left:82.5px;width:95.80000000000001px;text-align:center;top:292.20000000000005px;font-size:6.9px;color:#262626;-webkit-text-stroke:0.22px #333">09-Feb-25</div>
<div class="t" style="left:178.3px;width:95.69999999999999px;text-align:center;top:292.20000000000005px;font-size:6.9px;color:#262626;-webkit-text-stroke:0.22px #333">Sunday</div>
<div class="t" style="left:274px;width:95.19999999999999px;text-align:center;top:292.20000000000005px;font-size:6.9px;color:#262626;-webkit-text-stroke:0.22px #333">Team Outing</div>
<div class="t" style="left:369.2px;width:95.80000000000001px;text-align:center;top:292.20000000000005px;font-size:6.9px;color:#262626;-webkit-text-stroke:0.22px #333">11:30 AM</div>
<div class="t" style="left:465px;width:103.20000000000005px;text-align:center;top:292.20000000000005px;font-size:6.9px;color:#262626;-webkit-text-stroke:0.22px #333">Online (Zoom)</div>
<div class="t" style="left:568.2px;width:231.79999999999995px;text-align:center;top:292.20000000000005px;font-size:6.9px;color:#262626;-webkit-text-stroke:0.22px #333">Scheduled team event for coordination.</div>
<div class="a" style="left:30px;top:314.9px;width:740px;height:0.8px;background:#fefaec"></div>
<div class="t" style="left:30px;width:52.5px;text-align:center;top:306.1px;font-size:6.9px;color:#262626;-webkit-text-stroke:0.22px #333">11</div>
<div class="t" style="left:82.5px;width:95.80000000000001px;text-align:center;top:306.1px;font-size:6.9px;color:#262626;-webkit-text-stroke:0.22px #333">11-Feb-25</div>
<div class="t" style="left:178.3px;width:95.69999999999999px;text-align:center;top:306.1px;font-size:6.9px;color:#262626;-webkit-text-stroke:0.22px #333">Tuesday</div>
<div class="t" style="left:274px;width:95.19999999999999px;text-align:center;top:306.1px;font-size:6.9px;color:#262626;-webkit-text-stroke:0.22px #333">Workshop</div>
<div class="t" style="left:369.2px;width:95.80000000000001px;text-align:center;top:306.1px;font-size:6.9px;color:#262626;-webkit-text-stroke:0.22px #333">1:30 PM</div>
<div class="t" style="left:465px;width:103.20000000000005px;text-align:center;top:306.1px;font-size:6.9px;color:#262626;-webkit-text-stroke:0.22px #333">Online (Zoom)</div>
<div class="t" style="left:568.2px;width:231.79999999999995px;text-align:center;top:306.1px;font-size:6.9px;color:#262626;-webkit-text-stroke:0.22px #333">Scheduled team event for coordination.</div>
<div class="a" style="left:30px;top:328.79999999999995px;width:740px;height:0.8px;background:#fefaec"></div>
<div class="t" style="left:30px;width:52.5px;text-align:center;top:320.0px;font-size:6.9px;color:#262626;-webkit-text-stroke:0.22px #333">12</div>
<div class="t" style="left:82.5px;width:95.80000000000001px;text-align:center;top:320.0px;font-size:6.9px;color:#262626;-webkit-text-stroke:0.22px #333">19-Feb-25</div>
<div class="t" style="left:178.3px;width:95.69999999999999px;text-align:center;top:320.0px;font-size:6.9px;color:#262626;-webkit-text-stroke:0.22px #333">Wednesday</div>
<div class="t" style="left:274px;width:95.19999999999999px;text-align:center;top:320.0px;font-size:6.9px;color:#262626;-webkit-text-stroke:0.22px #333">Performance Review</div>
<div class="t" style="left:369.2px;width:95.80000000000001px;text-align:center;top:320.0px;font-size:6.9px;color:#262626;-webkit-text-stroke:0.22px #333">12:30 PM</div>
<div class="t" style="left:465px;width:103.20000000000005px;text-align:center;top:320.0px;font-size:6.9px;color:#262626;-webkit-text-stroke:0.22px #333">HR Office</div>
<div class="t" style="left:568.2px;width:231.79999999999995px;text-align:center;top:320.0px;font-size:6.9px;color:#262626;-webkit-text-stroke:0.22px #333">Scheduled team event for coordination.</div>
<div class="a" style="left:30px;top:342.7px;width:740px;height:0.8px;background:#fefaec"></div>
<div class="t" style="left:30px;width:52.5px;text-align:center;top:333.90000000000003px;font-size:6.9px;color:#262626;-webkit-text-stroke:0.22px #333">13</div>
<div class="t" style="left:82.5px;width:95.80000000000001px;text-align:center;top:333.90000000000003px;font-size:6.9px;color:#262626;-webkit-text-stroke:0.22px #333">20-Feb-25</div>
<div class="t" style="left:178.3px;width:95.69999999999999px;text-align:center;top:333.90000000000003px;font-size:6.9px;color:#262626;-webkit-text-stroke:0.22px #333">Thursday</div>
<div class="t" style="left:274px;width:95.19999999999999px;text-align:center;top:333.90000000000003px;font-size:6.9px;color:#262626;-webkit-text-stroke:0.22px #333">Team Meeting</div>
<div class="t" style="left:369.2px;width:95.80000000000001px;text-align:center;top:333.90000000000003px;font-size:6.9px;color:#262626;-webkit-text-stroke:0.22px #333">10:30 AM</div>
<div class="t" style="left:465px;width:103.20000000000005px;text-align:center;top:333.90000000000003px;font-size:6.9px;color:#262626;-webkit-text-stroke:0.22px #333">Online (Zoom)</div>
<div class="t" style="left:568.2px;width:231.79999999999995px;text-align:center;top:333.90000000000003px;font-size:6.9px;color:#262626;-webkit-text-stroke:0.22px #333">Scheduled team event for coordination.</div>
<div class="a" style="left:30px;top:356.6px;width:740px;height:0.8px;background:#fefaec"></div>
<div class="t" style="left:30px;width:52.5px;text-align:center;top:347.80000000000007px;font-size:6.9px;color:#262626;-webkit-text-stroke:0.22px #333">14</div>
<div class="t" style="left:82.5px;width:95.80000000000001px;text-align:center;top:347.80000000000007px;font-size:6.9px;color:#262626;-webkit-text-stroke:0.22px #333">26-Feb-25</div>
<div class="t" style="left:178.3px;width:95.69999999999999px;text-align:center;top:347.80000000000007px;font-size:6.9px;color:#262626;-webkit-text-stroke:0.22px #333">Wednesday</div>
<div class="t" style="left:274px;width:95.19999999999999px;text-align:center;top:347.80000000000007px;font-size:6.9px;color:#262626;-webkit-text-stroke:0.22px #333">Training Session</div>
<div class="t" style="left:369.2px;width:95.80000000000001px;text-align:center;top:347.80000000000007px;font-size:6.9px;color:#262626;-webkit-text-stroke:0.22px #333">1:00 PM</div>
<div class="t" style="left:465px;width:103.20000000000005px;text-align:center;top:347.80000000000007px;font-size:6.9px;color:#262626;-webkit-text-stroke:0.22px #333">Offsite Venue</div>
<div class="t" style="left:568.2px;width:231.79999999999995px;text-align:center;top:347.80000000000007px;font-size:6.9px;color:#262626;-webkit-text-stroke:0.22px #333">Scheduled team event for coordination.</div>
<div class="a" style="left:30px;top:370.5px;width:740px;height:0.8px;background:#fefaec"></div>
<div class="t" style="left:30px;width:52.5px;text-align:center;top:361.70000000000005px;font-size:6.9px;color:#262626;-webkit-text-stroke:0.22px #333">15</div>
<div class="t" style="left:82.5px;width:95.80000000000001px;text-align:center;top:361.70000000000005px;font-size:6.9px;color:#262626;-webkit-text-stroke:0.22px #333">28-Feb-25</div>
<div class="t" style="left:178.3px;width:95.69999999999999px;text-align:center;top:361.70000000000005px;font-size:6.9px;color:#262626;-webkit-text-stroke:0.22px #333">Friday</div>
<div class="t" style="left:274px;width:95.19999999999999px;text-align:center;top:361.70000000000005px;font-size:6.9px;color:#262626;-webkit-text-stroke:0.22px #333">Team Meeting</div>
<div class="t" style="left:369.2px;width:95.80000000000001px;text-align:center;top:361.70000000000005px;font-size:6.9px;color:#262626;-webkit-text-stroke:0.22px #333">11:30 AM</div>
<div class="t" style="left:465px;width:103.20000000000005px;text-align:center;top:361.70000000000005px;font-size:6.9px;color:#262626;-webkit-text-stroke:0.22px #333">Client Office</div>
<div class="t" style="left:568.2px;width:231.79999999999995px;text-align:center;top:361.70000000000005px;font-size:6.9px;color:#262626;-webkit-text-stroke:0.22px #333">Scheduled team event for coordination.</div>
<div class="a" style="left:30px;top:384.4px;width:740px;height:0.8px;background:#fefaec"></div>
<div class="t" style="left:30px;width:52.5px;text-align:center;top:375.6px;font-size:6.9px;color:#262626;-webkit-text-stroke:0.22px #333">16</div>
<div class="t" style="left:82.5px;width:95.80000000000001px;text-align:center;top:375.6px;font-size:6.9px;color:#262626;-webkit-text-stroke:0.22px #333">28-Feb-25</div>
<div class="t" style="left:178.3px;width:95.69999999999999px;text-align:center;top:375.6px;font-size:6.9px;color:#262626;-webkit-text-stroke:0.22px #333">Friday</div>
<div class="t" style="left:274px;width:95.19999999999999px;text-align:center;top:375.6px;font-size:6.9px;color:#262626;-webkit-text-stroke:0.22px #333">Product Launch</div>
<div class="t" style="left:369.2px;width:95.80000000000001px;text-align:center;top:375.6px;font-size:6.9px;color:#262626;-webkit-text-stroke:0.22px #333">1:30 PM</div>
<div class="t" style="left:465px;width:103.20000000000005px;text-align:center;top:375.6px;font-size:6.9px;color:#262626;-webkit-text-stroke:0.22px #333">Online (Zoom)</div>
<div class="t" style="left:568.2px;width:231.79999999999995px;text-align:center;top:375.6px;font-size:6.9px;color:#262626;-webkit-text-stroke:0.22px #333">Scheduled team event for coordination.</div>
<div class="a" style="left:30px;top:398.29999999999995px;width:740px;height:0.8px;background:#fefaec"></div>
<div class="t" style="left:30px;width:52.5px;text-align:center;top:389.5px;font-size:6.9px;color:#262626;-webkit-text-stroke:0.22px #333">17</div>
<div class="t" style="left:82.5px;width:95.80000000000001px;text-align:center;top:389.5px;font-size:6.9px;color:#262626;-webkit-text-stroke:0.22px #333">04-Mar-25</div>
<div class="t" style="left:178.3px;width:95.69999999999999px;text-align:center;top:389.5px;font-size:6.9px;color:#262626;-webkit-text-stroke:0.22px #333">Tuesday</div>
<div class="t" style="left:274px;width:95.19999999999999px;text-align:center;top:389.5px;font-size:6.9px;color:#262626;-webkit-text-stroke:0.22px #333">Training Session</div>
<div class="t" style="left:369.2px;width:95.80000000000001px;text-align:center;top:389.5px;font-size:6.9px;color:#262626;-webkit-text-stroke:0.22px #333">1:00 PM</div>
<div class="t" style="left:465px;width:103.20000000000005px;text-align:center;top:389.5px;font-size:6.9px;color:#262626;-webkit-text-stroke:0.22px #333">Main Office</div>
<div class="t" style="left:568.2px;width:231.79999999999995px;text-align:center;top:389.5px;font-size:6.9px;color:#262626;-webkit-text-stroke:0.22px #333">Scheduled team event for coordination.</div>
<div class="a" style="left:30px;top:412.2px;width:740px;height:0.8px;background:#fefaec"></div>
<div class="t" style="left:30px;width:52.5px;text-align:center;top:403.40000000000003px;font-size:6.9px;color:#262626;-webkit-text-stroke:0.22px #333">18</div>
<div class="t" style="left:82.5px;width:95.80000000000001px;text-align:center;top:403.40000000000003px;font-size:6.9px;color:#262626;-webkit-text-stroke:0.22px #333">05-Mar-25</div>
<div class="t" style="left:178.3px;width:95.69999999999999px;text-align:center;top:403.40000000000003px;font-size:6.9px;color:#262626;-webkit-text-stroke:0.22px #333">Wednesday</div>
<div class="t" style="left:274px;width:95.19999999999999px;text-align:center;top:403.40000000000003px;font-size:6.9px;color:#262626;-webkit-text-stroke:0.22px #333">Workshop</div>
<div class="t" style="left:369.2px;width:95.80000000000001px;text-align:center;top:403.40000000000003px;font-size:6.9px;color:#262626;-webkit-text-stroke:0.22px #333">10:00 AM</div>
<div class="t" style="left:465px;width:103.20000000000005px;text-align:center;top:403.40000000000003px;font-size:6.9px;color:#262626;-webkit-text-stroke:0.22px #333">HR Office</div>
<div class="t" style="left:568.2px;width:231.79999999999995px;text-align:center;top:403.40000000000003px;font-size:6.9px;color:#262626;-webkit-text-stroke:0.22px #333">Scheduled team event for coordination.</div>
<div class="a" style="left:30px;top:426.1px;width:740px;height:0.8px;background:#fefaec"></div>
<div class="t" style="left:30px;width:52.5px;text-align:center;top:417.30000000000007px;font-size:6.9px;color:#262626;-webkit-text-stroke:0.22px #333">19</div>
<div class="t" style="left:82.5px;width:95.80000000000001px;text-align:center;top:417.30000000000007px;font-size:6.9px;color:#262626;-webkit-text-stroke:0.22px #333">11-Mar-25</div>
<div class="t" style="left:178.3px;width:95.69999999999999px;text-align:center;top:417.30000000000007px;font-size:6.9px;color:#262626;-webkit-text-stroke:0.22px #333">Tuesday</div>
<div class="t" style="left:274px;width:95.19999999999999px;text-align:center;top:417.30000000000007px;font-size:6.9px;color:#262626;-webkit-text-stroke:0.22px #333">Client Call</div>
<div class="t" style="left:369.2px;width:95.80000000000001px;text-align:center;top:417.30000000000007px;font-size:6.9px;color:#262626;-webkit-text-stroke:0.22px #333">2:00 PM</div>
<div class="t" style="left:465px;width:103.20000000000005px;text-align:center;top:417.30000000000007px;font-size:6.9px;color:#262626;-webkit-text-stroke:0.22px #333">Cafeteria</div>
<div class="t" style="left:568.2px;width:231.79999999999995px;text-align:center;top:417.30000000000007px;font-size:6.9px;color:#262626;-webkit-text-stroke:0.22px #333">Scheduled team event for coordination.</div>
<div class="a" style="left:30px;top:440.0px;width:740px;height:0.8px;background:#fefaec"></div>
<div class="t" style="left:30px;width:52.5px;text-align:center;top:431.20000000000005px;font-size:6.9px;color:#262626;-webkit-text-stroke:0.22px #333">20</div>
<div class="t" style="left:82.5px;width:95.80000000000001px;text-align:center;top:431.20000000000005px;font-size:6.9px;color:#262626;-webkit-text-stroke:0.22px #333">29-Mar-25</div>
<div class="t" style="left:178.3px;width:95.69999999999999px;text-align:center;top:431.20000000000005px;font-size:6.9px;color:#262626;-webkit-text-stroke:0.22px #333">Saturday</div>
<div class="t" style="left:274px;width:95.19999999999999px;text-align:center;top:431.20000000000005px;font-size:6.9px;color:#262626;-webkit-text-stroke:0.22px #333">Client Call</div>
<div class="t" style="left:369.2px;width:95.80000000000001px;text-align:center;top:431.20000000000005px;font-size:6.9px;color:#262626;-webkit-text-stroke:0.22px #333">9:30 AM</div>
<div class="t" style="left:465px;width:103.20000000000005px;text-align:center;top:431.20000000000005px;font-size:6.9px;color:#262626;-webkit-text-stroke:0.22px #333">Cafeteria</div>
<div class="t" style="left:568.2px;width:231.79999999999995px;text-align:center;top:431.20000000000005px;font-size:6.9px;color:#262626;-webkit-text-stroke:0.22px #333">Scheduled team event for coordination.</div>
<div class="a" style="left:30px;top:453.9px;width:740px;height:0.8px;background:#fefaec"></div>
<div class="t" style="left:30px;width:52.5px;text-align:center;top:445.1px;font-size:6.9px;color:#262626;-webkit-text-stroke:0.22px #333">21</div>
<div class="t" style="left:82.5px;width:95.80000000000001px;text-align:center;top:445.1px;font-size:6.9px;color:#262626;-webkit-text-stroke:0.22px #333">30-Mar-25</div>
<div class="t" style="left:178.3px;width:95.69999999999999px;text-align:center;top:445.1px;font-size:6.9px;color:#262626;-webkit-text-stroke:0.22px #333">Sunday</div>
<div class="t" style="left:274px;width:95.19999999999999px;text-align:center;top:445.1px;font-size:6.9px;color:#262626;-webkit-text-stroke:0.22px #333">Project Deadline</div>
<div class="t" style="left:369.2px;width:95.80000000000001px;text-align:center;top:445.1px;font-size:6.9px;color:#262626;-webkit-text-stroke:0.22px #333">5:30 PM</div>
<div class="t" style="left:465px;width:103.20000000000005px;text-align:center;top:445.1px;font-size:6.9px;color:#262626;-webkit-text-stroke:0.22px #333">Online (Zoom)</div>
<div class="t" style="left:568.2px;width:231.79999999999995px;text-align:center;top:445.1px;font-size:6.9px;color:#262626;-webkit-text-stroke:0.22px #333">Scheduled team event for coordination.</div>
<div class="a" style="left:30px;top:467.8px;width:740px;height:0.8px;background:#fefaec"></div>
<div class="t" style="left:30px;width:52.5px;text-align:center;top:459.00000000000006px;font-size:6.9px;color:#262626;-webkit-text-stroke:0.22px #333">22</div>
<div class="t" style="left:82.5px;width:95.80000000000001px;text-align:center;top:459.00000000000006px;font-size:6.9px;color:#262626;-webkit-text-stroke:0.22px #333">13-Apr-25</div>
<div class="t" style="left:178.3px;width:95.69999999999999px;text-align:center;top:459.00000000000006px;font-size:6.9px;color:#262626;-webkit-text-stroke:0.22px #333">Sunday</div>
<div class="t" style="left:274px;width:95.19999999999999px;text-align:center;top:459.00000000000006px;font-size:6.9px;color:#262626;-webkit-text-stroke:0.22px #333">Team Meeting</div>
<div class="t" style="left:369.2px;width:95.80000000000001px;text-align:center;top:459.00000000000006px;font-size:6.9px;color:#262626;-webkit-text-stroke:0.22px #333">10:30 AM</div>
<div class="t" style="left:465px;width:103.20000000000005px;text-align:center;top:459.00000000000006px;font-size:6.9px;color:#262626;-webkit-text-stroke:0.22px #333">Online (Zoom)</div>
<div class="t" style="left:568.2px;width:231.79999999999995px;text-align:center;top:459.00000000000006px;font-size:6.9px;color:#262626;-webkit-text-stroke:0.22px #333">Scheduled team event for coordination.</div>
<div class="a" style="left:30px;top:481.7px;width:740px;height:0.8px;background:#fefaec"></div>
<div class="t" style="left:30px;width:52.5px;text-align:center;top:472.90000000000003px;font-size:6.9px;color:#262626;-webkit-text-stroke:0.22px #333">23</div>
<div class="t" style="left:82.5px;width:95.80000000000001px;text-align:center;top:472.90000000000003px;font-size:6.9px;color:#262626;-webkit-text-stroke:0.22px #333">15-Apr-25</div>
<div class="t" style="left:178.3px;width:95.69999999999999px;text-align:center;top:472.90000000000003px;font-size:6.9px;color:#262626;-webkit-text-stroke:0.22px #333">Tuesday</div>
<div class="t" style="left:274px;width:95.19999999999999px;text-align:center;top:472.90000000000003px;font-size:6.9px;color:#262626;-webkit-text-stroke:0.22px #333">Workshop</div>
<div class="t" style="left:369.2px;width:95.80000000000001px;text-align:center;top:472.90000000000003px;font-size:6.9px;color:#262626;-webkit-text-stroke:0.22px #333">3:00 PM</div>
<div class="t" style="left:465px;width:103.20000000000005px;text-align:center;top:472.90000000000003px;font-size:6.9px;color:#262626;-webkit-text-stroke:0.22px #333">HR Office</div>
<div class="t" style="left:568.2px;width:231.79999999999995px;text-align:center;top:472.90000000000003px;font-size:6.9px;color:#262626;-webkit-text-stroke:0.22px #333">Scheduled team event for coordination.</div>
<div class="a" style="left:30px;top:495.59999999999997px;width:740px;height:0.8px;background:#fefaec"></div>
<div class="t" style="left:30px;width:52.5px;text-align:center;top:486.8px;font-size:6.9px;color:#262626;-webkit-text-stroke:0.22px #333">24</div>
<div class="t" style="left:82.5px;width:95.80000000000001px;text-align:center;top:486.8px;font-size:6.9px;color:#262626;-webkit-text-stroke:0.22px #333">18-Apr-25</div>
<div class="t" style="left:178.3px;width:95.69999999999999px;text-align:center;top:486.8px;font-size:6.9px;color:#262626;-webkit-text-stroke:0.22px #333">Friday</div>
<div class="t" style="left:274px;width:95.19999999999999px;text-align:center;top:486.8px;font-size:6.9px;color:#262626;-webkit-text-stroke:0.22px #333">Team Outing</div>
<div class="t" style="left:369.2px;width:95.80000000000001px;text-align:center;top:486.8px;font-size:6.9px;color:#262626;-webkit-text-stroke:0.22px #333">2:00 PM</div>
<div class="t" style="left:465px;width:103.20000000000005px;text-align:center;top:486.8px;font-size:6.9px;color:#262626;-webkit-text-stroke:0.22px #333">Online (Zoom)</div>
<div class="t" style="left:568.2px;width:231.79999999999995px;text-align:center;top:486.8px;font-size:6.9px;color:#262626;-webkit-text-stroke:0.22px #333">Scheduled team event for coordination.</div>
<div class="a" style="left:82.1px;top:162.5px;width:0.8px;height:339.5px;background:#fefaec"></div>
<div class="a" style="left:177.9px;top:162.5px;width:0.8px;height:339.5px;background:#fefaec"></div>
<div class="a" style="left:273.6px;top:162.5px;width:0.8px;height:339.5px;background:#fefaec"></div>
<div class="a" style="left:368.8px;top:162.5px;width:0.8px;height:339.5px;background:#fefaec"></div>
<div class="a" style="left:464.6px;top:162.5px;width:0.8px;height:339.5px;background:#fefaec"></div>
<div class="a" style="left:567.8000000000001px;top:162.5px;width:0.8px;height:339.5px;background:#fefaec"></div>
<div class="a" style="left:0;top:494px;width:29.3px;height:8px;background:#f1f3f4"></div>
<div class="a" style="left:30px;top:496.1px;width:740px;height:5.899999999999977px;background:#fff"></div>
<div class="a" style="left:32px;top:494.8px;width:518px;height:7px;border-radius:3.5px;background:#dadce0"></div>
</body></html>
